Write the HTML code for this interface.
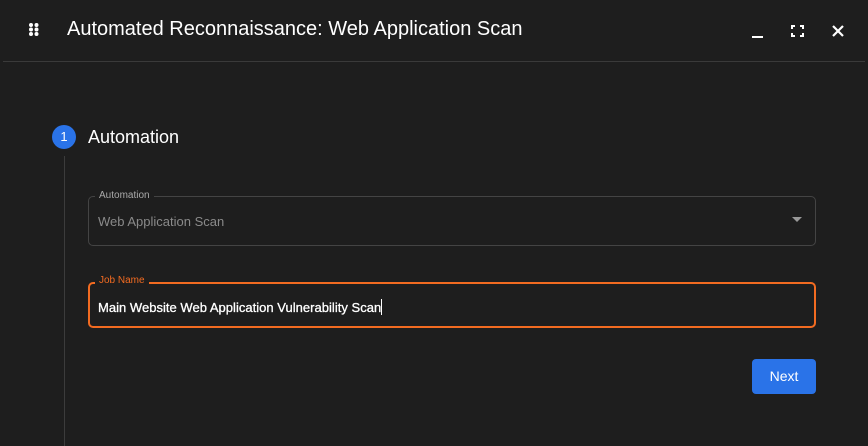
<!DOCTYPE html><html><head><style>
body{margin:0;width:868px;height:446px;background:#1e1e1e;overflow:hidden;font-family:"Liberation Sans",sans-serif;position:relative}
.a{position:absolute}
</style></head><body>
<div class="a" style="left:28px;top:22px;width:12px;height:14px">
<svg width="12" height="14"><g fill="#fff"><circle cx="3" cy="3" r="2"/><circle cx="8.5" cy="3" r="2"/><circle cx="3" cy="7.5" r="2"/><circle cx="8.5" cy="7.5" r="2"/><circle cx="3" cy="12" r="2"/><circle cx="8.5" cy="12" r="2"/></g></svg></div>
<div class="a" style="left:67px;top:18px;font-size:20px;color:#fff">Automated Reconnaissance: Web Application Scan</div>
<div class="a" style="left:752px;top:36px;width:11px;height:2px;background:#fff"></div>
<svg class="a" style="left:791px;top:25px" width="13" height="12"><path d="M1 4V1h3M9 1h3v3M12 8v3H9M4 11H1V8" stroke="#fff" stroke-width="2" fill="none"/></svg>
<svg class="a" style="left:831px;top:24px" width="14" height="14"><path d="M2 2L12 12M12 2L2 12" stroke="#fff" stroke-width="2.2"/></svg>
<div class="a" style="left:3px;top:61px;width:862px;height:1px;background:#3a3a3a"></div>
<div class="a" style="left:52px;top:125px;width:24px;height:24px;border-radius:50%;background:#2a73e8;color:#fff;font-size:13px;text-align:center;line-height:24px">1</div>
<div class="a" style="left:88px;top:127px;font-size:18px;color:#fff">Automation</div>
<div class="a" style="left:64px;top:156px;width:1px;height:290px;background:#3c3c3c"></div>
<div class="a" style="left:88px;top:196px;width:726px;height:48px;border:1px solid #444;border-radius:5px"></div>
<div class="a" style="left:95px;top:190px;padding:0 4px;background:#1e1e1e;font-size:10px;color:#aaa">Automation</div>
<div class="a" style="left:98px;top:214px;font-size:13px;color:#8a8a8a">Web Application Scan</div>
<svg class="a" style="left:792px;top:217px" width="10" height="6"><path d="M0 0h10L5 5z" fill="#999"/></svg>
<div class="a" style="left:88px;top:282px;width:724px;height:42px;border:2px solid #f26b21;border-radius:5px"></div>
<div class="a" style="left:95px;top:275px;padding:0 4px;background:#1e1e1e;font-size:10px;color:#f26b21">Job Name</div>
<div class="a" style="left:98px;top:299px;font-size:13px;color:#fff;letter-spacing:0.02px;-webkit-text-stroke:0.3px #fff">Main Website Web Application Vulnerability Scan<span style="display:inline-block;width:1px;height:16px;background:#fff;vertical-align:-3px"></span></div>
<div class="a" style="left:752px;top:359px;width:64px;height:35px;border-radius:4px;background:#2a73e8;color:#fff;font-size:14px;text-align:center;line-height:35px">Next</div>
</body></html>
